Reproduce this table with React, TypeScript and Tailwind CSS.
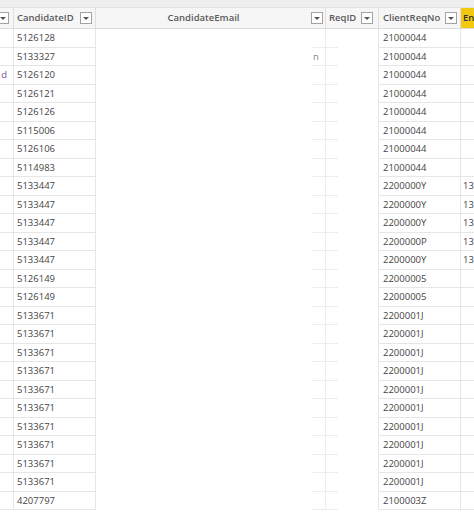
const ids = [
  '5126128', '5133327', '5126120', '5126121', '5126126', '5115006', '5126106', '5114983',
  '5133447', '5133447', '5133447', '5133447', '5133447', '5126149', '5126149',
  '5133671', '5133671', '5133671', '5133671', '5133671', '5133671', '5133671', '5133671',
  '5133671', '5133671', '4207797',
];

const reqNos = [
  '21000044', '21000044', '21000044', '21000044', '21000044', '21000044', '21000044', '21000044',
  '2200000Y', '2200000Y', '2200000Y', '2200000P', '2200000Y', '22000005', '22000005',
  '2200001J', '2200001J', '2200001J', '2200001J', '2200001J', '2200001J', '2200001J', '2200001J',
  '2200001J', '2200001J', '2100003Z',
];

const DropButton = ({ className = '' }: { className?: string }) => (
  <span
    className={`flex h-[12px] w-[12px] shrink-0 items-center justify-center border border-[#a3a3a3] bg-white ${className}`}
  >
    <span className="h-0 w-0 border-x-[3px] border-t-[3px] border-x-transparent border-t-[#555]" />
  </span>
);

const HeaderRow = () => (
  <div className="flex h-[21px] border-b border-[#dcdcdc] bg-[#f6f6f6] text-[9.5px] font-semibold text-[#5a5a5a]">
    <div className="flex w-[14px] items-center overflow-hidden border-r border-[#dedede]">
      <DropButton className="ml-[-3px]" />
    </div>
    <div className="flex w-[82px] items-center justify-between border-r border-[#dedede] pl-[3px] pr-[3px]">
      <span>CandidateID</span>
      <DropButton />
    </div>
    <div className="flex w-[230px] items-center border-r border-[#dedede] pr-[2px]">
      <span className="flex-1 text-center">CandidateEmail</span>
      <DropButton />
    </div>
    <div className="flex w-[53px] items-center justify-between border-r border-[#dedede] pl-[3px] pr-[5px]">
      <span>ReqID</span>
      <DropButton />
    </div>
    <div className="flex w-[82px] items-center justify-between border-r border-[#dedede] pl-[4px] pr-[3px]">
      <span>ClientReqNo</span>
      <DropButton />
    </div>
    <div className="flex min-w-0 flex-1 items-center overflow-hidden whitespace-nowrap bg-[#f2c811] pl-[2px] text-[#333]">
      En
    </div>
  </div>
);

const DataRow = ({ id, reqNo, index }: { id: string; reqNo: string; index: number }) => {
  const hasEn = index >= 8 && index <= 12;
  return (
    <div className="flex h-[18.5px] text-[9.5px] leading-none text-[#444]">
      <div className="flex w-[14px] items-center justify-end overflow-hidden border-r border-b border-[#e6e6e6] pr-[6px] text-[#7b4f8f]">
        {index === 2 ? 'd' : ''}
      </div>
      <div className="flex w-[82px] items-center border-r border-b border-[#e6e6e6] pl-[3px]">{id}</div>
      <div className="flex w-[230px]">
        <div className="w-[216px]" />
        <div className="flex flex-1 items-center border-r border-b border-[#ececec] pl-[1px] text-[#888]">
          {index === 1 ? 'n' : ''}
        </div>
      </div>
      <div className="flex w-[53px] border-r border-[#e6e6e6]">
        <div className="w-[12px] border-b border-[#ececec]" />
      </div>
      <div className="flex w-[82px] items-center border-r border-b border-[#e6e6e6] pl-[4px]">{reqNo}</div>
      <div className="flex min-w-0 flex-1 items-center overflow-hidden whitespace-nowrap border-b border-[#e6e6e6] pl-[2px]">
        {hasEn ? '13' : ''}
      </div>
    </div>
  );
};

export default function App() {
  return (
    <div
      className="h-[515px] w-[474px] overflow-hidden bg-white"
      style={{ fontFamily: '"Open Sans", "Noto Sans", sans-serif' }}
    >
      <div className="h-[8px] border-b border-[#e2e2e2] bg-[#eeeeee]" />
      <HeaderRow />
      {ids.map((id, i) => (
        <DataRow key={i} id={id} reqNo={reqNos[i]} index={i} />
      ))}
    </div>
  );
}
